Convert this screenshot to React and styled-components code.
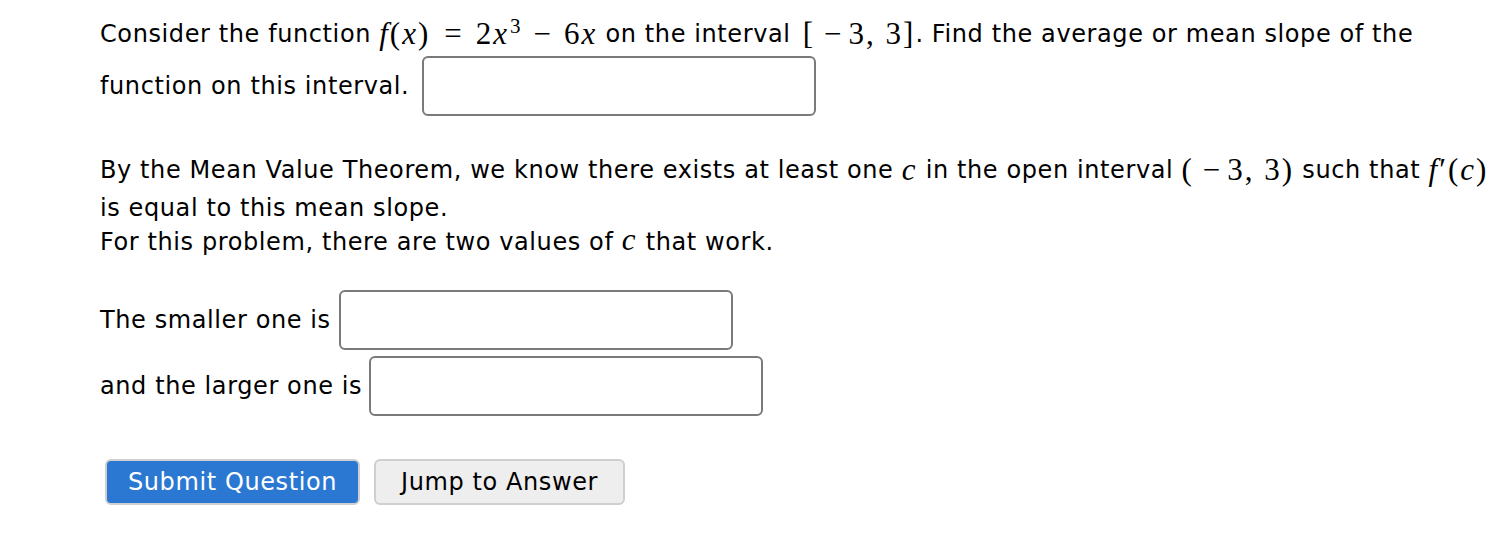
import React from "react";
import styled, { createGlobalStyle } from "styled-components";

const Global = createGlobalStyle`
  html, body { margin: 0; padding: 0; background: #fff; }
  body {
    font-family: "DejaVu Sans", sans-serif;
    color: #000;
  }
`;

const Page = styled.div`
  padding: 14px 0 0 100px;
  font-size: 24px;
  letter-spacing: 0.6px;
  width: 1500px;
  box-sizing: border-box;
`;

const Para = styled.div`
  white-space: nowrap;
  margin-bottom: ${(p) => p.$mb || 0}px;
`;

const Text = styled.div`
  line-height: 32px;
  margin-top: ${(p) => p.$mt || 0}px;
`;

const Line = styled.div`
  height: ${(p) => p.$h}px;
  display: flex;
  align-items: center;
  white-space: pre;
  margin-bottom: ${(p) => p.$mb || 0}px;
`;

const M = styled.span`
  font-family: "Liberation Serif", "DejaVu Serif", serif;
  font-style: ${(p) => (p.$up ? "normal" : "italic")};
  font-size: 31px;
  letter-spacing: 2px;
  margin: 0 ${(p) => p.$r || 0}px 0 ${(p) => p.$l || 0}px;
`;

const Op = styled.span`
  font-family: "Liberation Serif", "DejaVu Serif", serif;
  font-size: 31px;
  letter-spacing: 0;
  margin: 0 ${(p) => p.$m ?? 14}px;
`;

const Sup = styled.span`
  font-family: "Liberation Serif", "DejaVu Serif", serif;
  font-size: 21px;
  letter-spacing: 0;
  align-self: flex-start;
  margin-left: 1px;
`;

const Answer = styled.input`
  box-sizing: border-box;
  width: 394px;
  height: 60px;
  border: 2px solid #7a7a7a;
  border-radius: 6px;
  margin-left: ${(p) => p.$ml || 10}px;
  background: #fff;
  outline: none;
  font-size: 24px;
  padding: 0 8px;
`;

const Buttons = styled.div`
  display: flex;
  gap: 14px;
  margin-left: 5px;
`;

const Button = styled.button`
  box-sizing: border-box;
  height: 46px;
  width: ${(p) => p.$w}px;
  border-radius: 6px;
  border: 2px solid #cfcfcf;
  background: ${(p) => (p.$primary ? "#2a78d2" : "#eeeeee")};
  color: ${(p) => (p.$primary ? "#fff" : "#000")};
  font-family: "DejaVu Sans", sans-serif;
  font-size: 24px;
  letter-spacing: 0.6px;
  padding: 0;
  cursor: pointer;
`;

export default function App() {
  return (
    <>
      <Global />
      <Page>
        <Line $h={40}>
          {"Consider the function "}
          <M>f</M>
          <M $up>(</M>
          <M>x</M>
          <M $up>)</M>
          <Op>=</Op>
          <M $up>2</M>
          <M>x</M>
          <Sup>3</Sup>
          <Op $m={13}>−</Op>
          <M $up>6</M>
          <M>x</M>
          {" on the interval "}
          <M $up $l={4} $r={2}>[</M>
          <Op $m={7}>−</Op>
          <M $up>3, 3]</M>
          {". Find the average or mean slope of the"}
        </Line>
        <Line $h={64} $mb={33}>
          {"function on this interval."}
          <Answer aria-label="mean slope" $ml={13} />
        </Line>
        <Para $mb={29}>
          <Line $h={38}>
            {"By the Mean Value Theorem, we know there exists at least one "}
            <M>c</M>
            {" in the open interval "}
            <M $up $r={2}>(</M>
            <Op $m={7}>−</Op>
            <M $up>3, 3)</M>
            {" such that "}
            <M>f</M>
            <M $up>′(</M>
            <M>c</M>
            <M $up>)</M>
          </Line>
          <Text $mt={3}>is equal to this mean slope.</Text>
          <Text>
            For this problem, there are two values of <M>c</M> that work.
          </Text>
        </Para>
        <Line $h={66}>
          {"The smaller one is"}
          <Answer aria-label="smaller c" $ml={8} />
        </Line>
        <Line $h={66} $mb={40}>
          {"and the larger one is"}
          <Answer aria-label="larger c" $ml={7} />
        </Line>
        <Buttons>
          <Button $primary $w={255}>Submit Question</Button>
          <Button $w={251}>Jump to Answer</Button>
        </Buttons>
      </Page>
    </>
  );
}
